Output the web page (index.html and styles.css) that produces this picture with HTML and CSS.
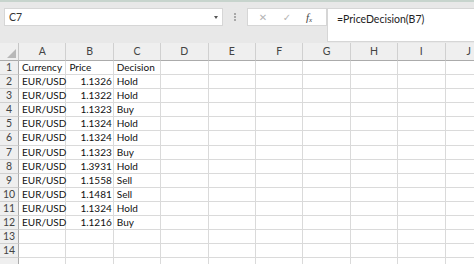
FILE: index.html
```html
<!DOCTYPE html>
<html lang="en">
<head>
    <meta charset="UTF-8">
    <meta name="viewport" content="width=device-width, initial-scale=1.0">
    <title>PriceDecision</title>
    <link rel="stylesheet" href="styles.css">
</head>
<body>
    <div class="top-strip"></div>

    <div class="toolbar">
        <div class="name-box">
            <span>C7</span>
            <span class="arrow"></span>
        </div>
        <div class="grip"><i></i><i></i><i></i></div>
        <div class="fx-box">
            <span class="btn">&#x2715;</span>
            <span class="btn">&#x2713;</span>
            <span class="fx">f<sub>x</sub></span>
        </div>
        <div class="formula">=PriceDecision(B7)</div>
    </div>

    <div class="sheet">
        <div class="corner"><span class="tri"></span></div>
        <div class="col-h">A</div><div class="col-h">B</div><div class="col-h">C</div><div class="col-h">D</div><div class="col-h">E</div>
        <div class="col-h">F</div><div class="col-h">G</div><div class="col-h">H</div><div class="col-h">I</div><div class="col-h">J</div>

        <div class="row-h">1</div><div class="c">Currency</div><div class="c">Price</div><div class="c">Decision</div><div class="c"></div><div class="c"></div><div class="c"></div><div class="c"></div><div class="c"></div><div class="c"></div><div class="c"></div>
        <div class="row-h">2</div><div class="c">EUR/USD</div><div class="c num">1.1326</div><div class="c">Hold</div><div class="c"></div><div class="c"></div><div class="c"></div><div class="c"></div><div class="c"></div><div class="c"></div><div class="c"></div>
        <div class="row-h">3</div><div class="c">EUR/USD</div><div class="c num">1.1322</div><div class="c">Hold</div><div class="c"></div><div class="c"></div><div class="c"></div><div class="c"></div><div class="c"></div><div class="c"></div><div class="c"></div>
        <div class="row-h">4</div><div class="c">EUR/USD</div><div class="c num">1.1323</div><div class="c">Buy</div><div class="c"></div><div class="c"></div><div class="c"></div><div class="c"></div><div class="c"></div><div class="c"></div><div class="c"></div>
        <div class="row-h">5</div><div class="c">EUR/USD</div><div class="c num">1.1324</div><div class="c">Hold</div><div class="c"></div><div class="c"></div><div class="c"></div><div class="c"></div><div class="c"></div><div class="c"></div><div class="c"></div>
        <div class="row-h">6</div><div class="c">EUR/USD</div><div class="c num">1.1324</div><div class="c">Hold</div><div class="c"></div><div class="c"></div><div class="c"></div><div class="c"></div><div class="c"></div><div class="c"></div><div class="c"></div>
        <div class="row-h">7</div><div class="c">EUR/USD</div><div class="c num">1.1323</div><div class="c">Buy</div><div class="c"></div><div class="c"></div><div class="c"></div><div class="c"></div><div class="c"></div><div class="c"></div><div class="c"></div>
        <div class="row-h">8</div><div class="c">EUR/USD</div><div class="c num">1.3931</div><div class="c">Hold</div><div class="c"></div><div class="c"></div><div class="c"></div><div class="c"></div><div class="c"></div><div class="c"></div><div class="c"></div>
        <div class="row-h">9</div><div class="c">EUR/USD</div><div class="c num">1.1558</div><div class="c">Sell</div><div class="c"></div><div class="c"></div><div class="c"></div><div class="c"></div><div class="c"></div><div class="c"></div><div class="c"></div>
        <div class="row-h">10</div><div class="c">EUR/USD</div><div class="c num">1.1481</div><div class="c">Sell</div><div class="c"></div><div class="c"></div><div class="c"></div><div class="c"></div><div class="c"></div><div class="c"></div><div class="c"></div>
        <div class="row-h">11</div><div class="c">EUR/USD</div><div class="c num">1.1324</div><div class="c">Hold</div><div class="c"></div><div class="c"></div><div class="c"></div><div class="c"></div><div class="c"></div><div class="c"></div><div class="c"></div>
        <div class="row-h">12</div><div class="c">EUR/USD</div><div class="c num">1.1216</div><div class="c">Buy</div><div class="c"></div><div class="c"></div><div class="c"></div><div class="c"></div><div class="c"></div><div class="c"></div><div class="c"></div>
        <div class="row-h">13</div><div class="c"></div><div class="c"></div><div class="c"></div><div class="c"></div><div class="c"></div><div class="c"></div><div class="c"></div><div class="c"></div><div class="c"></div><div class="c"></div>
        <div class="row-h">14</div><div class="c"></div><div class="c"></div><div class="c"></div><div class="c"></div><div class="c"></div><div class="c"></div><div class="c"></div><div class="c"></div><div class="c"></div><div class="c"></div>
        <div class="row-h"></div><div class="c"></div><div class="c"></div><div class="c"></div><div class="c"></div><div class="c"></div><div class="c"></div><div class="c"></div><div class="c"></div><div class="c"></div><div class="c"></div>
    </div>
</body>
</html>
```

FILE: styles.css
```css
* {
    margin: 0;
    padding: 0;
    box-sizing: border-box;
}

body {
    width: 474px;
    height: 264px;
    overflow: hidden;
    background-color: #ffffff;
    font-family: Lato, "Liberation Sans", sans-serif;
    color: #000;
}

.top-strip {
    height: 2px;
    background-color: #c7d4cd;
}

/* barra de nombre y formula */
.toolbar {
    height: 41px;
    background-color: #e8e8e8;
    display: flex;
    align-items: flex-start;
    padding-top: 6px;
}

.name-box {
    margin-left: 4px;
    width: 219px;
    height: 18px;
    background-color: #fff;
    border: 1px solid #d6d6d6;
    display: flex;
    align-items: center;
    justify-content: space-between;
    padding: 0 4px 0 4px;
    font-size: 10.5px;
    color: #333;
}

.arrow {
    width: 0;
    height: 0;
    border-left: 2.5px solid transparent;
    border-right: 2.5px solid transparent;
    border-top: 3px solid #555;
    margin-top: 1px;
}

.grip {
    width: 24px;
    height: 18px;
    display: flex;
    flex-direction: column;
    align-items: center;
    justify-content: center;
    gap: 1px;
}

.grip i {
    width: 2px;
    height: 2px;
    background-color: #a8a8a8;
}

.fx-box {
    width: 80px;
    height: 18px;
    background-color: #fff;
    border: 1px solid #d6d6d6;
    display: flex;
    align-items: center;
    padding-left: 9px;
    gap: 12px;
}

.btn {
    width: 12px;
    text-align: center;
    font-size: 10px;
    color: #b4b4b4;
    font-family: "DejaVu Sans", sans-serif;
}

.fx {
    font-family: "Liberation Serif", serif;
    font-style: italic;
    font-size: 11px;
    color: #444;
    margin-left: 1px;
}

.fx sub {
    font-size: 7px;
    vertical-align: -1px;
}

.formula {
    flex: 1;
    height: 34px;
    background-color: #fff;
    border: 1px solid #d6d6d6;
    border-right: none;
    font-size: 10.5px;
    color: #222;
    padding: 4px 0 0 9px;
}

/* hoja */
.sheet {
    display: grid;
    grid-template-columns: 19px repeat(10, 47.4px);
    grid-template-rows: 18px;
    grid-auto-rows: 14.1px;
    width: 560px;
}

.corner,
.col-h,
.row-h {
    background-color: #efefef;
    color: #444;
}

.corner {
    border-right: 1px solid #c6c6c6;
    border-bottom: 1px solid #ababab;
    position: relative;
}

.tri {
    position: absolute;
    right: 2px;
    bottom: 2px;
    width: 0;
    height: 0;
    border-left: 9px solid transparent;
    border-bottom: 9px solid #b8b8b8;
}

.col-h {
    font-size: 10.5px;
    text-align: center;
    line-height: 17px;
    border-right: 1px solid #d0d0d0;
    border-bottom: 1px solid #ababab;
}

.row-h {
    font-size: 10.5px;
    text-align: center;
    line-height: 13px;
    border-right: 1px solid #ababab;
    border-bottom: 1px solid #d0d0d0;
}

.c {
    font-size: 10px;
    line-height: 13px;
    padding-left: 3px;
    color: #111;
    border-right: 1px solid #dadada;
    border-bottom: 1px solid #dadada;
    white-space: nowrap;
}

.num {
    text-align: right;
    padding-right: 1px;
}
```
